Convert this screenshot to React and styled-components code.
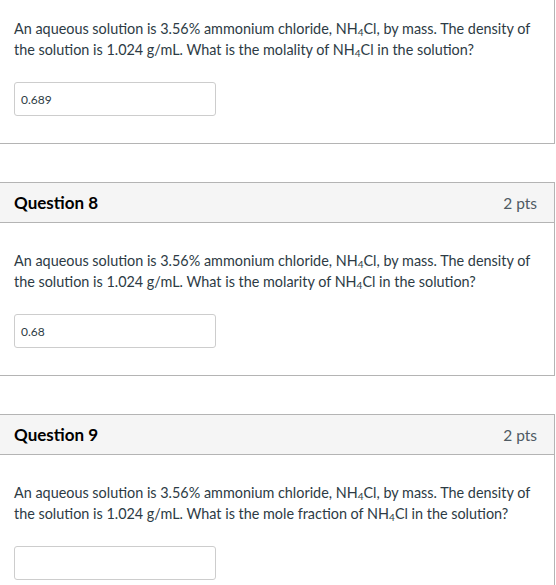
import React from "react";
import styled, { createGlobalStyle } from "styled-components";

const Global = createGlobalStyle`
  html, body { margin: 0; padding: 0; background: #ffffff; }
  body { font-family: Lato, "Noto Sans", sans-serif; color: #2d3b45; }
`;

const Frame = styled.div`
  width: 556px;
  height: 585px;
  overflow: hidden;
`;

const Page = styled.div`
  margin: -9px 0 0 -1px;
  width: 556px;
  display: flex;
  flex-direction: column;
  gap: 38px;
`;

const Panel = styled.section`
  border: 1px solid #b4b4b4;
  border-top-width: ${(p) => (p.$cut ? 0 : 1)}px;
  background: #ffffff;
`;

const Header = styled.header`
  height: 40px;
  box-sizing: border-box;
  background: #f5f5f5;
  border-bottom: 1px solid #b4b4b4;
  display: flex;
  align-items: center;
  justify-content: space-between;
  padding: 0 17px 0 14px;
`;

const Title = styled.h2`
  margin: 0;
  font-size: 17px;
  font-weight: 700;
  color: #000000;
`;

const Points = styled.span`
  font-size: 15.5px;
  color: #4f5a63;
`;

const Body = styled.div`
  padding: 27px 14px 27px 14px;
  display: flex;
  flex-direction: column;
  gap: 22px;
`;

const Text = styled.p`
  margin: 0;
  font-size: 14.4px;
  line-height: 21px;
  color: #2d3b45;
`;

const Sub = styled.span`
  font-size: 10px;
  line-height: 0;
  position: relative;
  top: 2px;
`;

const Answer = styled.div`
  width: 202px;
  height: 34px;
  box-sizing: border-box;
  border: 1px solid #cdcdcd;
  border-radius: 3px;
  padding: 0 6px;
  display: flex;
  align-items: center;
  font-size: 12px;
  color: #2d3b45;
`;

const questions = [
  { id: 7, kind: "molality", answer: "0.689", cut: true },
  { id: 8, kind: "molarity", answer: "0.68" },
  { id: 9, kind: "mole fraction", answer: "" },
];

function Question({ q }) {
  return (
    <Panel $cut={q.cut}>
      {!q.cut && (
        <Header>
          <Title>Question {q.id}</Title>
          <Points>2 pts</Points>
        </Header>
      )}
      <Body>
        <Text>
          An aqueous solution is 3.56% ammonium chloride, NH<Sub>4</Sub>Cl, by mass. The density of
          the solution is 1.024 g/mL. What is the {q.kind} of NH<Sub>4</Sub>Cl in the solution?
        </Text>
        <Answer>{q.answer}</Answer>
      </Body>
    </Panel>
  );
}

export default function App() {
  return (
    <Frame>
      <Global />
      <Page>
        {questions.map((q) => (
          <Question key={q.id} q={q} />
        ))}
      </Page>
    </Frame>
  );
}
